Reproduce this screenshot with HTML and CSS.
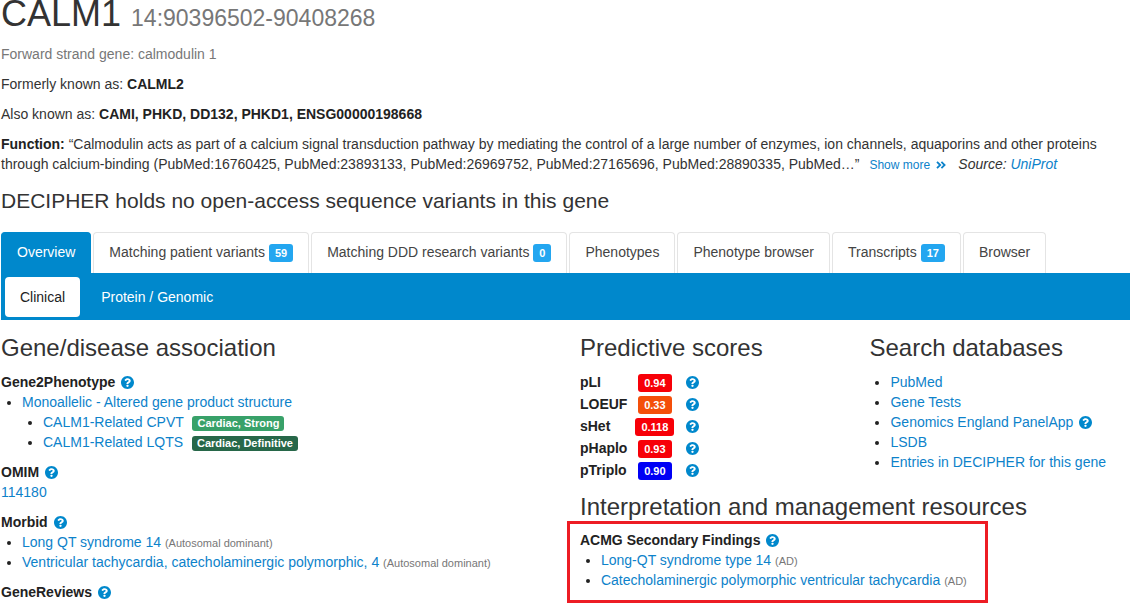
FILE: index.html
```html
<!DOCTYPE html>
<html lang="en">
<head>
  <meta charset="UTF-8">
  <meta name="viewport" content="width=device-width, initial-scale=1.0">
  <title>CALM1</title>
  <link rel="stylesheet" href="styles.css">
</head>
<body>

  <!-- Icons -->
  <svg class="sprite" width="0" height="0" aria-hidden="true">
    <symbol id="icon-help" viewBox="8 8 496 496">
      <path d="M504 256c0 136.997-111.043 248-248 248S8 392.997 8 256C8 119.083 119.043 8 256 8s248 111.083 248 248zM262.655 90c-54.497 0-89.255 22.957-116.549 63.758-3.536 5.286-2.353 12.415 2.715 16.258l34.699 26.31c5.205 3.947 12.621 3.008 16.665-2.122 17.864-22.658 30.113-35.797 57.303-35.797 20.429 0 45.698 13.148 45.698 32.958 0 14.976-12.363 22.667-32.534 33.976C247.128 238.528 216 254.941 216 296v4c0 6.627 5.373 12 12 12h56c6.627 0 12-5.373 12-12v-1.333c0-28.462 83.186-29.647 83.186-106.667 0-58.002-60.165-102-116.531-102zM256 338c-25.365 0-46 20.635-46 46 0 25.364 20.635 46 46 46s46-20.636 46-46c0-25.365-20.635-46-46-46z"/>
    </symbol>
    <symbol id="icon-more" viewBox="0 0 10 8">
      <path d="M1 .8 4.2 4 1 7.2M5.4 .8 8.6 4 5.4 7.2" fill="none" stroke="currentColor" stroke-width="1.8"/>
    </symbol>
  </svg>

  <!-- Gene summary -->
  <header class="gene-header">
    <h1>CALM1 <small>14:90396502-90408268</small></h1>
    <p class="muted">Forward strand gene: calmodulin 1</p>
    <p>Formerly known as: <strong>CALML2</strong></p>
    <p>Also known as: <strong>CAMI, PHKD, DD132, PHKD1, ENSG00000198668</strong></p>
    <p class="function"><strong>Function:</strong> “Calmodulin acts as part of a calcium signal transduction pathway by mediating the control of a large number of enzymes, ion channels, aquaporins and other proteins through calcium-binding (PubMed:16760425, PubMed:23893133, PubMed:26969752, PubMed:27165696, PubMed:28890335, PubMed…” <a href="#" class="show-more">Show more <svg class="more-icon" aria-hidden="true"><use href="#icon-more"/></svg></a> <em>Source: <a href="#">UniProt</a></em></p>
    <p class="lead">DECIPHER holds no open-access sequence variants in this gene</p>
  </header>

  <!-- Tabs -->
  <nav class="tabs">
    <a href="#" class="tab active">Overview</a>
    <a href="#" class="tab">Matching patient variants <span class="badge count">59</span></a>
    <a href="#" class="tab">Matching DDD research variants <span class="badge count">0</span></a>
    <a href="#" class="tab">Phenotypes</a>
    <a href="#" class="tab">Phenotype browser</a>
    <a href="#" class="tab">Transcripts <span class="badge count">17</span></a>
    <a href="#" class="tab">Browser</a>
  </nav>
  <nav class="pills">
    <a href="#" class="pill active">Clinical</a>
    <a href="#" class="pill">Protein / Genomic</a>
  </nav>

  <main class="columns">
    <section>
      <h3>Gene/disease association</h3>

      <div class="block">
        <h4>Gene2Phenotype <a href="#" aria-label="Help"><svg class="help"><use href="#icon-help"/></svg></a></h4>
        <ul>
          <li><a href="#">Monoallelic - Altered gene product structure</a>
            <ul>
              <li><a href="#">CALM1-Related CPVT</a> <span class="label strong">Cardiac, Strong</span></li>
              <li><a href="#">CALM1-Related LQTS</a> <span class="label definitive">Cardiac, Definitive</span></li>
            </ul>
          </li>
        </ul>
      </div>

      <div class="block">
        <h4>OMIM <a href="#" aria-label="Help"><svg class="help"><use href="#icon-help"/></svg></a></h4>
        <a href="#">114180</a>
      </div>

      <div class="block">
        <h4>Morbid <a href="#" aria-label="Help"><svg class="help"><use href="#icon-help"/></svg></a></h4>
        <ul>
          <li><a href="#">Long QT syndrome 14</a> <small>(Autosomal dominant)</small></li>
          <li><a href="#">Ventricular tachycardia, catecholaminergic polymorphic, 4</a> <small>(Autosomal dominant)</small></li>
        </ul>
      </div>

      <h4>GeneReviews <a href="#" aria-label="Help"><svg class="help"><use href="#icon-help"/></svg></a></h4>
    </section>

    <div>
      <div class="sub-columns">
        <section>
          <h3>Predictive scores</h3>
          <table class="scores">
            <tr>
              <th scope="row">pLI</th>
              <td><span class="badge red">0.94</span></td>
              <td><a href="#" aria-label="Help"><svg class="help"><use href="#icon-help"/></svg></a></td>
            </tr>
            <tr>
              <th scope="row">LOEUF</th>
              <td><span class="badge orange">0.33</span></td>
              <td><a href="#" aria-label="Help"><svg class="help"><use href="#icon-help"/></svg></a></td>
            </tr>
            <tr>
              <th scope="row">sHet</th>
              <td><span class="badge red">0.118</span></td>
              <td><a href="#" aria-label="Help"><svg class="help"><use href="#icon-help"/></svg></a></td>
            </tr>
            <tr>
              <th scope="row">pHaplo</th>
              <td><span class="badge red">0.93</span></td>
              <td><a href="#" aria-label="Help"><svg class="help"><use href="#icon-help"/></svg></a></td>
            </tr>
            <tr>
              <th scope="row">pTriplo</th>
              <td><span class="badge blue">0.90</span></td>
              <td><a href="#" aria-label="Help"><svg class="help"><use href="#icon-help"/></svg></a></td>
            </tr>
          </table>
        </section>

        <section>
          <h3>Search databases</h3>
          <ul>
            <li><a href="#">PubMed</a></li>
            <li><a href="#">Gene Tests</a></li>
            <li><a href="#">Genomics England PanelApp</a> <a href="#" aria-label="Help"><svg class="help"><use href="#icon-help"/></svg></a></li>
            <li><a href="#">LSDB</a></li>
            <li><a href="#">Entries in DECIPHER for this gene</a></li>
          </ul>
        </section>
      </div>

      <section class="resources">
        <h3>Interpretation and management resources</h3>
        <div class="highlight">
          <h4>ACMG Secondary Findings <a href="#" aria-label="Help"><svg class="help"><use href="#icon-help"/></svg></a></h4>
          <ul>
            <li><a href="#">Long-QT syndrome type 14</a> <small>(AD)</small></li>
            <li><a href="#">Catecholaminergic polymorphic ventricular tachycardia</a> <small>(AD)</small></li>
          </ul>
        </div>
      </section>
    </div>
  </main>

</body>
</html>
```
FILE: styles.css
```css
* {
  box-sizing: border-box;
}

body {
  margin: 0;
  padding-left: 1px;
  font-family: "Liberation Sans", Arial, sans-serif;
  font-size: 14px;
  line-height: 20px;
  color: #333;
  background: #fff;
}

a {
  color: #0d82ca;
  text-decoration: none;
}

.sprite {
  position: absolute;
}

h1, h3 {
  font-weight: normal;
}

h1 {
  margin: 0 0 14px;
  font-size: 36px;
  line-height: 28px;
}

h1 small {
  font-size: 23px;
  line-height: 1;
  color: #777;
}

h3 {
  margin: 15px 0 11px;
  font-size: 24px;
  line-height: 26px;
}

h4 {
  margin: 0;
  font-size: 14px;
  color: #222;
}

p {
  margin: 0 0 10px;
}

strong {
  color: #222;
}

ul {
  margin: 0;
  padding-left: 21px;
}

ul ul {
  list-style-type: disc;
}

li::marker {
  color: #222;
}

small {
  font-size: 11px;
  line-height: 1;
  color: #777;
}

.muted {
  color: #777;
}

.function {
  margin-bottom: 13px;
  padding-right: 30px;
}

.show-more {
  margin: 0 8px 0 6px;
  font-size: 12px;
}

.more-icon {
  width: 10px;
  height: 8px;
  margin-left: 3px;
}

.lead {
  margin-bottom: 18px;
  font-size: 21px;
  line-height: 26px;
}

/* Tabs */
.tabs {
  display: flex;
  gap: 2px;
}

.tab {
  padding: 9px 15px 11px;
  border: 1px solid #e4e4e4;
  border-bottom: 0;
  border-radius: 4px 4px 0 0;
  color: #444;
}

.tab.active {
  border-color: #0088cc;
  background: #0088cc;
  color: #fff;
}

.pills {
  display: flex;
  gap: 6px;
  padding: 4px 4px 3px;
  background: #0088cc;
}

.pill {
  padding: 10px 15px;
  border-radius: 4px;
  color: #fff;
}

.pill.active {
  background: #fff;
  color: #222;
}

.badge {
  display: inline-block;
  padding: 0 6px;
  border-radius: 3px;
  font-size: 11px;
  font-weight: bold;
  line-height: 18px;
  color: #fff;
}

.count {
  background: #23a6f0;
}

.red {
  background: #f70008;
}

.orange {
  background: #f44f0a;
}

.blue {
  background: #0000f5;
}

.label {
  display: inline-block;
  margin-left: 5px;
  padding: 0 5px;
  border-radius: 3px;
  font-size: 11px;
  font-weight: bold;
  line-height: 15px;
  color: #fff;
}

.strong {
  background: #38a169;
}

.definitive {
  background: #276749;
}

/* Columns */
.columns {
  display: grid;
  grid-template-columns: 20fr 19fr;
}

.sub-columns {
  display: grid;
  grid-template-columns: 10fr 9fr;
}

.block {
  margin-bottom: 10px;
}

.help {
  width: 13px;
  height: 13px;
  margin-left: 2px;
  fill: #0088cc;
  vertical-align: -2px;
}

.scores {
  margin-top: -1px;
  border-collapse: collapse;
  line-height: 20px;
}

.scores th,
.scores td {
  height: 22px;
  padding: 0;
  text-align: center;
}

.scores th {
  padding-right: 8px;
  text-align: left;
  color: #222;
}

.scores td:last-child {
  padding-left: 10px;
}

.resources h3 {
  margin: 13px 0 1px;
}

.highlight {
  width: fit-content;
  margin-left: -13px;
  padding: 6px 18px 10px 10px;
  border: 3px solid #ed1c24;
}
```
